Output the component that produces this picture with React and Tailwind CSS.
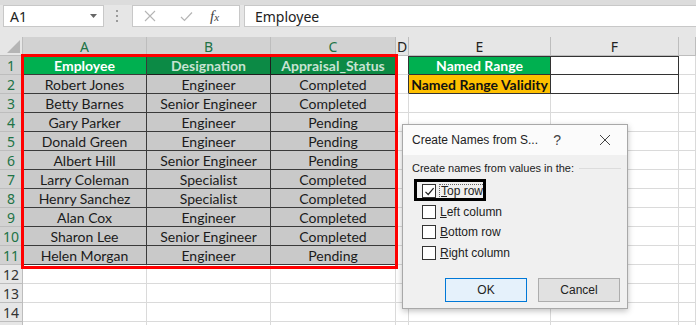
import React from "react";

const rows = [
  ["Robert Jones", "Engineer", "Completed"],
  ["Betty Barnes", "Senior Engineer", "Completed"],
  ["Gary Parker", "Engineer", "Pending"],
  ["Donald Green", "Engineer", "Pending"],
  ["Albert Hill", "Senior Engineer", "Pending"],
  ["Larry Coleman", "Specialist", "Completed"],
  ["Henry Sanchez", "Specialist", "Completed"],
  ["Alan Cox", "Engineer", "Completed"],
  ["Sharon Lee", "Senior Engineer", "Completed"],
  ["Helen Morgan", "Engineer", "Pending"],
];

const cellFont = { fontFamily: "Lato, 'Noto Sans', sans-serif" };
const uiFont = { fontFamily: "'Noto Sans', 'Open Sans', sans-serif" };
const dlgFont = { fontFamily: "'Liberation Sans', Arial, sans-serif" };

function Checkbox({ checked }) {
  return (
    <div className="w-[14px] h-[14px] border border-[#333] bg-white flex items-center justify-center shrink-0">
      {checked && (
        <svg width="11" height="11" viewBox="0 0 11 11">
          <path d="M1.5 5.8 L4.2 8.5 L9.6 2.2" fill="none" stroke="#222" strokeWidth="1.2" />
        </svg>
      )}
    </div>
  );
}

export default function App() {
  const tableCell = "border-r border-b border-[#3a3a3a] bg-[#c9c9c9] flex items-center justify-center text-[14px] text-[#1b1b1b] whitespace-nowrap overflow-hidden";
  const emptyCell = "border-r border-b border-[#dadada] bg-white";
  const rowHead = (n, sel, label = true) => (
    <div
      key={"rh" + n}
      className={
        "border-r border-b border-[#bdbdbd] flex items-center justify-center text-[14px] " +
        (sel ? "bg-[#d2d2d2] text-[#217346]" : "bg-[#e6e6e6] text-[#333]")
      }
      style={uiFont}
    >
      {label ? n : ""}
    </div>
  );

  const cells = [];
  cells.push(
    <div key="corner" className="bg-[#e6e6e6] border-r border-b border-[#bdbdbd] relative">
      <svg className="absolute right-[2px] bottom-[2px]" width="13" height="13" viewBox="0 0 13 13">
        <polygon points="13,0 13,13 0,13" fill="#b5b5b5" />
      </svg>
    </div>
  );
  ["A", "B", "C"].forEach((c) =>
    cells.push(
      <div key={"ch" + c} className="bg-[#d2d2d2] border-r border-b border-[#bdbdbd] flex items-center justify-center text-[14px] text-[#217346]" style={uiFont}>
        {c}
      </div>
    )
  );
  ["D", "E", "F", ""].forEach((c, i) =>
    cells.push(
      <div key={"ch2" + i} className="bg-[#e6e6e6] border-r border-b border-[#bdbdbd] flex items-center justify-center text-[14px] text-[#222]" style={uiFont}>
        {c}
      </div>
    )
  );

  cells.push(rowHead(1, true));
  cells.push(
    <div key="a1" className="border-r border-b border-[#3a3a3a] bg-[#00b050] flex items-center justify-center text-[14px] font-bold text-white" style={cellFont}>
      Employee
    </div>
  );
  cells.push(
    <div key="b1" className="border-r border-b border-[#1e1e1e] bg-[#0c8a45] flex items-center justify-center text-[14px] font-bold text-[#c7e3d2]" style={cellFont}>
      Designation
    </div>
  );
  cells.push(
    <div key="c1" className="border-r border-b border-[#1e1e1e] bg-[#0c8a45] flex items-center justify-center text-[14px] font-bold text-[#c7e3d2]" style={cellFont}>
      Appraisal_Status
    </div>
  );
  cells.push(<div key="d1" className="border-r border-b border-r-[#333] border-b-[#dadada] bg-white" />);
  cells.push(
    <div key="e1" className="border-r border-b border-t border-[#333] bg-[#00b050] flex items-center justify-center text-[14px] font-bold text-white" style={cellFont}>
      Named Range
    </div>
  );
  cells.push(<div key="f1" className="border-r border-b border-t border-[#333] bg-white" />);
  cells.push(<div key="g1" className={emptyCell} />);

  rows.forEach((r, i) => {
    const n = i + 2;
    cells.push(rowHead(n, true));
    r.forEach((v, j) =>
      cells.push(
        <div key={"c" + n + j} className={tableCell} style={cellFont}>
          {v}
        </div>
      )
    );
    if (n === 2) {
      cells.push(<div key="d2" className="border-r border-b border-r-[#333] border-b-[#dadada] bg-white" />);
      cells.push(
        <div key="e2" className="border-r border-b border-[#333] bg-[#ffc000] flex items-center justify-center text-[14px] font-bold text-[#111] whitespace-nowrap" style={cellFont}>
          Named Range Validity
        </div>
      );
      cells.push(<div key="f2" className="border-r border-b border-[#333] bg-white" />);
      cells.push(<div key="g2" className={emptyCell} />);
    } else {
      for (let k = 0; k < 4; k++) cells.push(<div key={"e" + n + k} className={emptyCell} />);
    }
  });

  [12, 13, 14, 15].forEach((n) => {
    cells.push(rowHead(n, false, n !== 15));
    for (let k = 0; k < 7; k++) cells.push(<div key={"x" + n + k} className={emptyCell} />);
  });

  return (
    <div className="w-[696px] h-[325px] overflow-hidden relative bg-white" style={uiFont}>
      {/* formula bar */}
      <div className="h-[37px] bg-[#e6e6e6] flex items-start border-t-[5px] border-[#dcdcdc]">
        <div className="ml-[3px] w-[101px] h-[22px] bg-white border border-[#c8c8c8] flex items-center justify-between pl-[6px] pr-[6px]">
          <span className="text-[14px] text-[#222]">A1</span>
          <svg width="7" height="4" viewBox="0 0 7 4">
            <polygon points="0,0 7,0 3.5,4" fill="#666" />
          </svg>
        </div>
        <div className="ml-[12px] mt-[5px] flex flex-col gap-[3px]">
          <div className="w-[2px] h-[2px] bg-[#9a9a9a]" />
          <div className="w-[2px] h-[2px] bg-[#9a9a9a]" />
          <div className="w-[2px] h-[2px] bg-[#9a9a9a]" />
        </div>
        <div className="ml-[14px] w-[108px] h-[22px] bg-white border border-[#c8c8c8] flex items-center">
          <svg className="ml-[11px]" width="12" height="12" viewBox="0 0 12 12">
            <path d="M1 1 L11 11 M11 1 L1 11" stroke="#b5b5b5" strokeWidth="1.1" />
          </svg>
          <svg className="ml-[24px]" width="13" height="11" viewBox="0 0 13 11">
            <path d="M1 6 L4.5 9.5 L12 1.5" fill="none" stroke="#b5b5b5" strokeWidth="1.2" />
          </svg>
          <span className="ml-[17px] text-[15px] italic text-[#444]" style={{ fontFamily: "'Liberation Serif', serif" }}>
            f<span className="text-[11px]">x</span>
          </span>
        </div>
        <div className="ml-[4px] flex-1 h-[22px] bg-white border-y border-l border-[#c8c8c8] flex items-center pl-[10px]">
          <span className="text-[14px] text-[#222]">Employee</span>
        </div>
      </div>

      {/* grid */}
      <div className="grid grid-cols-[23px_124px_124px_125px_13px_142px_128px_1fr] auto-rows-[19px]">
        {cells}
      </div>

      {/* red selection border overlay */}
      <div className="absolute left-[21px] top-[54px] w-[377px] h-[215px] border-[3px] border-[#ff0000] pointer-events-none" />

      {/* dialog */}
      <div className="absolute left-[402px] top-[124px] w-[226px] h-[185px] bg-[#f0f0f0] border border-[#a8a8a8] shadow-[0_2px_6px_rgba(0,0,0,0.25)] flex flex-col" style={dlgFont}>
        <div className="h-[30px] bg-[#fbfbfb] flex items-center pl-[9px] pr-[16px] text-[12px] text-[#222]">
          <span className="flex-1 whitespace-nowrap">Create Names from S...</span>
          <span className="mr-[38px] text-[14px] text-[#444]">?</span>
          <svg width="12" height="12" viewBox="0 0 12 12">
            <path d="M1 1 L11 11 M11 1 L1 11" stroke="#444" strokeWidth="1" />
          </svg>
        </div>
        <div className="flex items-center pl-[9px] pr-[6px] mt-[5px] text-[11px] text-[#222]">
          <span className="whitespace-nowrap">Create names from values in the:</span>
          <div className="flex-1 ml-[5px] h-px bg-[#dcdcdc]" />
        </div>
        <div className="flex flex-col gap-[5.7px] mt-[7px] pl-[19px] text-[12px] text-[#222]">
          <div className="flex items-center gap-[3px] h-[15px] relative">
            <div className="absolute left-[-8px] top-[-5px] w-[72px] h-[22px] border-[3px] border-black" />
            <Checkbox checked />
            <span className="border border-dotted border-[#666] px-[1px] leading-[13px]">
              <span className="underline">T</span>op row
            </span>
          </div>
          <div className="flex items-center gap-[4px] h-[15px]">
            <Checkbox />
            <span><span className="underline">L</span>eft column</span>
          </div>
          <div className="flex items-center gap-[4px] h-[15px]">
            <Checkbox />
            <span><span className="underline">B</span>ottom row</span>
          </div>
          <div className="flex items-center gap-[4px] h-[15px]">
            <Checkbox />
            <span><span className="underline">R</span>ight column</span>
          </div>
        </div>
        <div className="flex gap-[11px] pl-[42px] mt-[17px]">
          <div className="w-[82px] h-[24px] bg-[#e5f1fb] border border-[#0078d7] flex items-center justify-center text-[12px] text-[#222]">
            OK
          </div>
          <div className="w-[82px] h-[24px] bg-[#e1e1e1] border border-[#adadad] flex items-center justify-center text-[12px] text-[#222]">
            Cancel
          </div>
        </div>
      </div>
    </div>
  );
}
